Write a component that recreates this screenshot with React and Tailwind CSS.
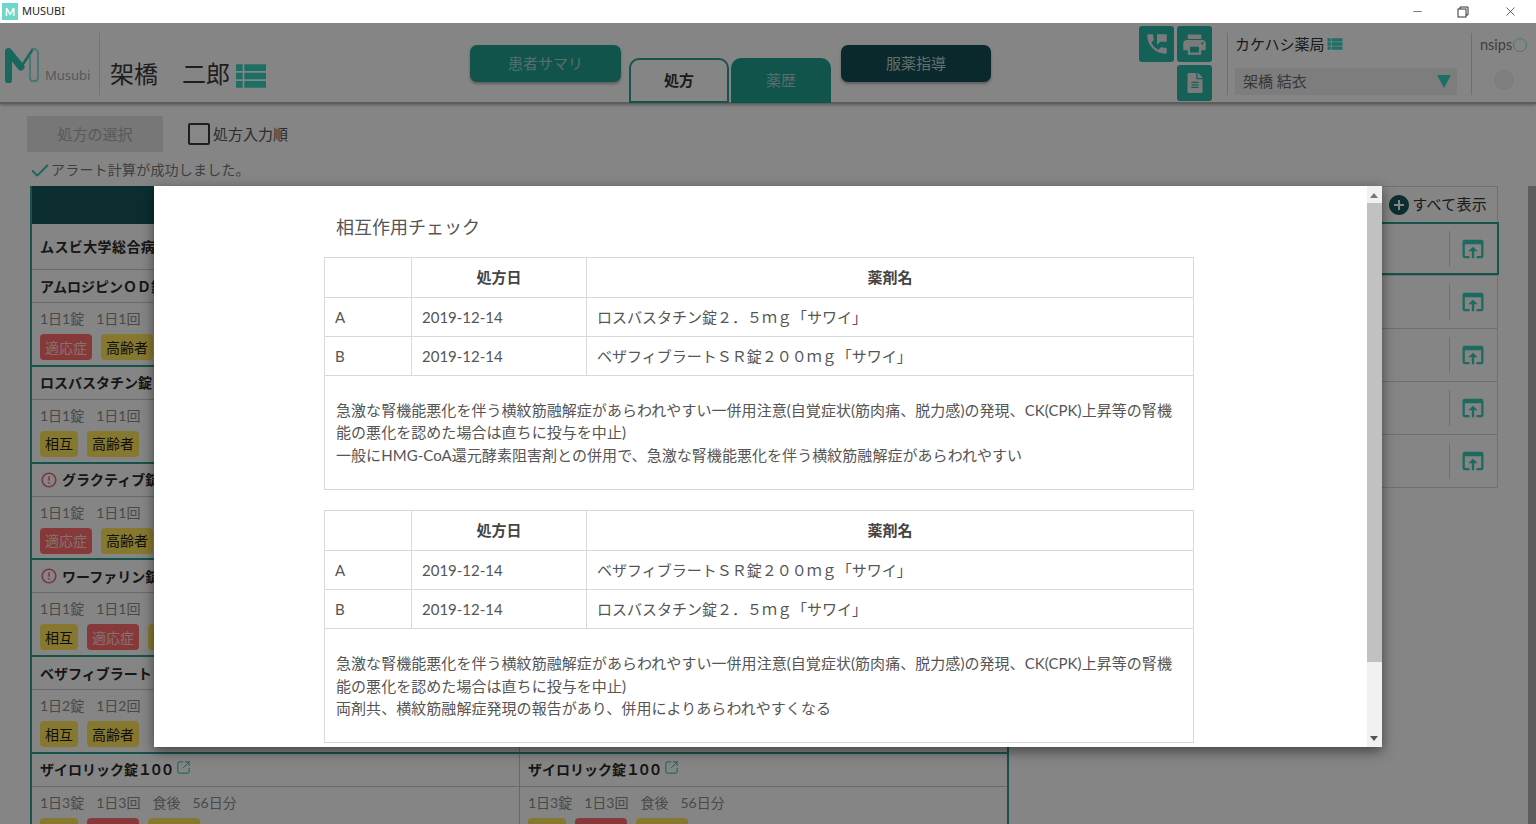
import React from "react";
import { MdPermPhoneMsg, MdPrint, MdViewList, MdOpenInBrowser, MdErrorOutline, MdAddCircle } from "react-icons/md";
import { FaFileAlt } from "react-icons/fa";
import { Check, SquareArrowOutUpRight, Minus, X } from "lucide-react";

const Y = "bg-[#ffe35a] text-[#1c1c1c]";
const R = "bg-[#ff6d6d] text-[#fbd5d5]";

const meds = [
  { n: "アムロジピンＯＤ錠５ｍｇ", tags: [["適応症", R, 52], ["高齢者", Y, 52]] },
  { n: "ロスバスタチン錠２．５ｍｇ", tags: [["相互", Y, 38], ["高齢者", Y, 52]] },
  { n: "グラクティブ錠５０ｍｇ", alert: true, tags: [["適応症", R, 52], ["高齢者", Y, 52]] },
  { n: "ワーファリン錠１ｍｇ", alert: true, tags: [["相互", Y, 38], ["適応症", R, 52], ["高齢者", Y, 52]] },
  { n: "ベザフィブラートＳＲ錠２００ｍｇ", tags: [["相互", Y, 38], ["高齢者", Y, 52]], d: "1日2錠", c: "1日2回" },
];

const ZYLORIC = { n: <>ザイロリック錠<span className="tracking-[-2.7px]">１００</span></>, d: "1日3錠", c: "1日3回", tags: [["相互", Y, 38], ["適応症", R, 52], ["高齢者", Y, 52]] };

function MedCell({ m, link, tail }) {
  return (
    <div className="flex-1 min-w-0 border-r border-[#c4c4c4] last:border-r-0">
      <div className="h-[33px] flex items-center pl-[8px] gap-[4px] border-b border-[#c8c8c8] overflow-hidden whitespace-nowrap">
        {m.alert && <MdErrorOutline className="text-[18px] text-[#ef5f6c] shrink-0" />}
        <span className="text-[14px] font-bold text-[#2a2a2a]">{m.n}</span>
        {link && <SquareArrowOutUpRight className="w-[15px] h-[15px] text-[#34b8a6] -mt-[4px]" strokeWidth={1.6} />}
      </div>
      <div className="pl-[8px] pt-[5px] text-[14px] text-[#8a8a8a] whitespace-nowrap h-[30px] flex gap-[12px]">
        <span>{m.d || "1日1錠"}</span><span>{m.c || "1日1回"}</span>{tail && <><span>食後</span><span>56日分</span></>}
      </div>
      <div className="pl-[8px] pt-[1px] flex gap-[9px] h-[31px]">
        {m.tags.map(([t, c, w]) => (
          <span key={t} style={{ width: w }} className={`h-[26px] rounded-[4px] flex items-center justify-center text-[14px] ${c}`}>{t}</span>
        ))}
      </div>
    </div>
  );
}

function InteractionTable({ a, b, note }) {
  const td = "border border-[#d9d9d9] px-[10px] h-[39px]";
  return (
    <table className="w-[870px] border-collapse table-fixed text-[15px] text-[#555] mb-[20px]">
      <colgroup>
        <col className="w-[87px]" /><col className="w-[175px]" /><col />
      </colgroup>
      <tbody>
        <tr className="font-bold text-[#444]">
          <td className={`${td} h-[40px]`}></td>
          <td className={`${td} h-[40px] text-center`}>処方日</td>
          <td className={`${td} h-[40px] text-center`}>薬剤名</td>
        </tr>
        <tr><td className={td}>A</td><td className={td}>2019-12-14</td><td className={td}>{a}</td></tr>
        <tr><td className={td}>B</td><td className={td}>2019-12-14</td><td className={td}>{b}</td></tr>
        <tr>
          <td colSpan={3} className="border border-[#d9d9d9] px-[11px] pt-[23px] pb-[23px] leading-[22.4px] tracking-[0.05px]">
            {note.map((l) => <div key={l}>{l}</div>)}
          </td>
        </tr>
      </tbody>
    </table>
  );
}

const ROS = "ロスバスタチン錠２．５ｍｇ「サワイ」";
const BEZ = "ベザフィブラートＳＲ錠２００ｍｇ「サワイ」";
const COMMON = "急激な腎機能悪化を伴う横紋筋融解症があらわれやすい一併用注意(自覚症状(筋肉痛、脱力感)の発現、CK(CPK)上昇等の腎機能の悪化を認めた場合は直ちに投与を中止)";

export default function App() {
  return (
    <div className="relative w-[1536px] h-[824px] overflow-hidden bg-white font-['Lato','Noto_Sans_CJK_JP',sans-serif]">
      {/* title bar */}
      <div className="h-[23px] flex items-center bg-white">
        <div className="w-[16px] h-[17px] ml-[2px] bg-[#6fd6ca] flex items-center justify-center text-white text-[11px] font-bold leading-none">M</div>
        <span className="ml-[4px] text-[11px] text-[#222] font-['Noto_Sans',sans-serif]">MUSUBI</span>
        <div className="ml-auto flex items-center text-[#333]">
          <Minus className="w-[13px] h-[13px] mr-[33px]" strokeWidth={1.2} />
          <svg viewBox="0 0 12 12" className="w-[12px] h-[12px] mr-[34px]" fill="none" stroke="currentColor"><rect x="1" y="3" width="8" height="8" /><path d="M3 3V1h8v8H9" /></svg>
          <X className="w-[15px] h-[15px] mr-[18px]" strokeWidth={1.2} />
        </div>
      </div>

      {/* app */}
      <div className="h-[801px] bg-[#fbfbfb] flex flex-col overflow-hidden">
        <header className="h-[81px] shrink-0 flex border-b-[2px] border-[#b0b0b0] shadow-[0_1px_3px_rgba(0,0,0,0.3)] relative">
          <div className="w-[100px] h-[62px] mt-[10px] border-r border-[#dcdcdc] flex items-end pl-[4px] pb-[12px]">
            <svg viewBox="0 0 36 36" className="w-[36px] h-[36px] shrink-0" fill="none">
              <path d="M4.5 33V4.5L17 20" stroke="#2fc4b2" strokeWidth="7" strokeLinejoin="round" strokeLinecap="round" />
              <path d="M17 20L28 3.5" stroke="#2fc4b2" strokeWidth="2.6" strokeLinecap="round" />
              <path d="M27 2h3a4 4 0 0 1 4 4v25a3 3 0 0 1-3 3h-2a3 3 0 0 1-3-3V8" stroke="#7fe3d7" strokeWidth="1.8" />
            </svg>
            <span className="ml-[5px] text-[13px] leading-[16px] text-[#a6a6a6] font-['Noto_Sans',sans-serif]">Musubi</span>
          </div>
          <div className="ml-[10px] w-[126px] pt-[32px] text-[24px] leading-[38px] text-[#3a3a3a] whitespace-nowrap">架橋　二郎</div>
          <MdViewList className="text-[40px] text-[#38d1be] ml-[-5px] mt-[33px]" />

          <div className="absolute left-[470px] top-[22px] flex items-start">
            <button className="w-[151px] h-[37px] rounded-[7px] bg-[#1f9f8f] text-[#a8d0ca] text-[15px] shadow-[0_2px_3px_rgba(0,0,0,0.3)]">患者サマリ</button>
            <button className="w-[100px] h-[45px] mt-[13px] ml-[8px] rounded-t-[10px] border-[2px] border-[#2a9e8f] bg-[#fbfbfb] text-[15px] font-bold text-[#333]">処方</button>
            <button className="w-[100px] h-[45px] mt-[13px] ml-[2px] rounded-t-[10px] bg-[#1f9f8f] text-[#a8d0ca] text-[15px]">薬歴</button>
            <button className="w-[150px] h-[37px] ml-[10px] rounded-[7px] bg-[#124e53] text-[#bfcfd0] text-[15px] shadow-[0_2px_3px_rgba(0,0,0,0.3)]">服薬指導</button>
          </div>

          <div className="absolute left-[1139px] top-[3px] w-[73px] flex flex-wrap justify-end gap-x-[3px] gap-y-[3px]">
            <div className="w-[35px] h-[36px] rounded-[3px] bg-[#28b5a4] flex items-center justify-center text-[#e8e8e8]"><MdPermPhoneMsg className="text-[26px]" /></div>
            <div className="w-[35px] h-[36px] rounded-[3px] bg-[#28b5a4] flex items-center justify-center text-[#e8e8e8]"><MdPrint className="text-[27px]" /></div>
            <div className="w-[35px] h-[36px] rounded-[3px] bg-[#28b5a4] flex items-center justify-center text-[#e8e8e8]"><FaFileAlt className="text-[20px]" /></div>
          </div>

          <div className="absolute left-[1227px] top-[10px] h-[62px] border-l border-[#d0d0d0] pl-[7px] w-[245px] border-r">
            <div className="flex items-center h-[22px] text-[15px] text-[#333]">カケハシ薬局<MdViewList className="text-[20px] text-[#38d1be] ml-[1px]" /></div>
            <div className="mt-[13px] w-[222px] h-[27px] bg-[#ececec] flex items-center pl-[8px] text-[15px] text-[#666] relative">
              架橋 結衣
              <span className="absolute right-[6px] top-[7px] w-0 h-0 border-l-[7px] border-r-[7px] border-t-[13px] border-l-transparent border-r-transparent border-t-[#38d1be]"></span>
            </div>
          </div>
          <div className="absolute left-[1480px] top-[11px] flex items-center text-[14.5px] text-[#777]">
            nsips<span className="w-[14px] h-[14px] rounded-full border border-[#7fe3d7] ml-[1px]"></span>
          </div>
          <div className="absolute left-[1494px] top-[47px] w-[20px] h-[20px] rounded-full bg-[#eeeeee]"></div>
        </header>

        <div className="flex-1 flex min-h-0">
          <main className="w-[1528px] min-w-0 pl-[27px] pr-[30px] relative overflow-hidden">
            <div className="flex items-center h-[36px] mt-[12px]">
              <button className="w-[136px] h-[36px] bg-[#e0e0e0] text-[#a8a8a8] text-[15px]">処方の選択</button>
              <span className="ml-[25px] w-[22px] h-[22px] rounded-[2px] border-[2px] border-[#3a3a3a] bg-white"></span>
              <span className="ml-[3px] text-[15px] text-[#555]">処方入力順</span>
            </div>
            <div className="flex items-center h-[24px] mt-[5px] ml-[2px] text-[14px] text-[#777]">
              <Check className="w-[22px] h-[22px] text-[#34bfae] mt-[4px]" strokeWidth={2} />
              <span className="tracking-[0.2px]">アラート計算が成功しました。</span>
            </div>
            <div className="flex items-start mt-[5px] ml-[3px]">
              <div className="w-[979px] shrink-0 border-l-[2px] border-r-[2px] border-[#2a9e8f]">
                <div className="h-[38px] bg-[#17575c]"></div>
                <div className="h-[46px] flex items-center pl-[8px] text-[14px] font-bold tracking-[0.4px] text-[#2a2a2a] border-b border-[#c8c8c8]">ムスビ大学総合病院</div>
                {meds.map((m) => (
                  <div key={m.n} className="flex h-[96.8px] border-b-[2px] border-[#2a9e8f]">
                    <MedCell m={m} />
                    <MedCell m={m} />
                  </div>
                ))}
                <div className="flex h-[97px]">
                  <MedCell m={ZYLORIC} link tail />
                  <MedCell m={ZYLORIC} link tail />
                </div>
              </div>
              <div className="ml-[353px] w-[136px] shrink-0 border border-[#d4d4d4] text-[#333]">
                <div className="h-[35px] flex items-center justify-end pr-[10px] text-[15px] tracking-[0.3px]">
                  <MdAddCircle className="text-[24px] text-[#17575c]" /><span className="ml-[1px]">すべて表示</span>
                </div>
                {[0, 1, 2, 3, 4].map((i) => (
                  <div key={i} className={`h-[53px] flex items-center justify-end ${i === 0 ? "border-[2px] border-[#2a9e8f] -mr-[2px] pr-[10px]" : "pr-[10px] border-t border-[#d0d0d0]"}`}>
                    <div className="h-[36px] border-l border-[#d0d0d0] pl-[9px] flex items-center">
                      <MdOpenInBrowser className="text-[28px] text-[#38c9b6]" />
                    </div>
                  </div>
                ))}
              </div>
            </div>
          </main>
          <div className="w-[8px] relative"><div className="absolute top-[82px] bottom-0 w-[8px] bg-[#b0b0b0]"></div></div>
        </div>
      </div>

      {/* dim layer */}
      <div className="absolute left-0 right-0 top-[23px] bottom-0 bg-black/[0.47]"></div>

      {/* modal */}
      <div className="absolute left-[154px] top-[186px] w-[1228px] h-[561px] bg-white shadow-[0_4px_12px_rgba(0,0,0,0.5)] flex overflow-hidden">
        <div className="flex-1 min-w-0 overflow-hidden pl-[170px]">
          <h2 className="pl-[12px] pt-[28px] h-[71px] text-[18px] leading-[27px] font-normal text-[#555]">相互作用チェック</h2>
          <InteractionTable a={ROS} b={BEZ} note={[COMMON, "一般にHMG-CoA還元酵素阻害剤との併用で、急激な腎機能悪化を伴う横紋筋融解症があらわれやすい"]} />
          <InteractionTable a={BEZ} b={ROS} note={[COMMON, "両剤共、横紋筋融解症発現の報告があり、併用によりあらわれやすくなる"]} />
        </div>
        <div className="w-[15px] bg-[#f1f1f1] relative shrink-0">
          <span className="absolute left-[3px] top-[7px] w-0 h-0 border-l-[4px] border-r-[4px] border-b-[5px] border-l-transparent border-r-transparent border-b-[#777]"></span>
          <div className="absolute left-0 top-[17px] w-[15px] h-[459px] bg-[#c1c1c1]"></div>
          <span className="absolute left-[3px] bottom-[6px] w-0 h-0 border-l-[4px] border-r-[4px] border-t-[5px] border-l-transparent border-r-transparent border-t-[#555]"></span>
        </div>
      </div>
    </div>
  );
}
